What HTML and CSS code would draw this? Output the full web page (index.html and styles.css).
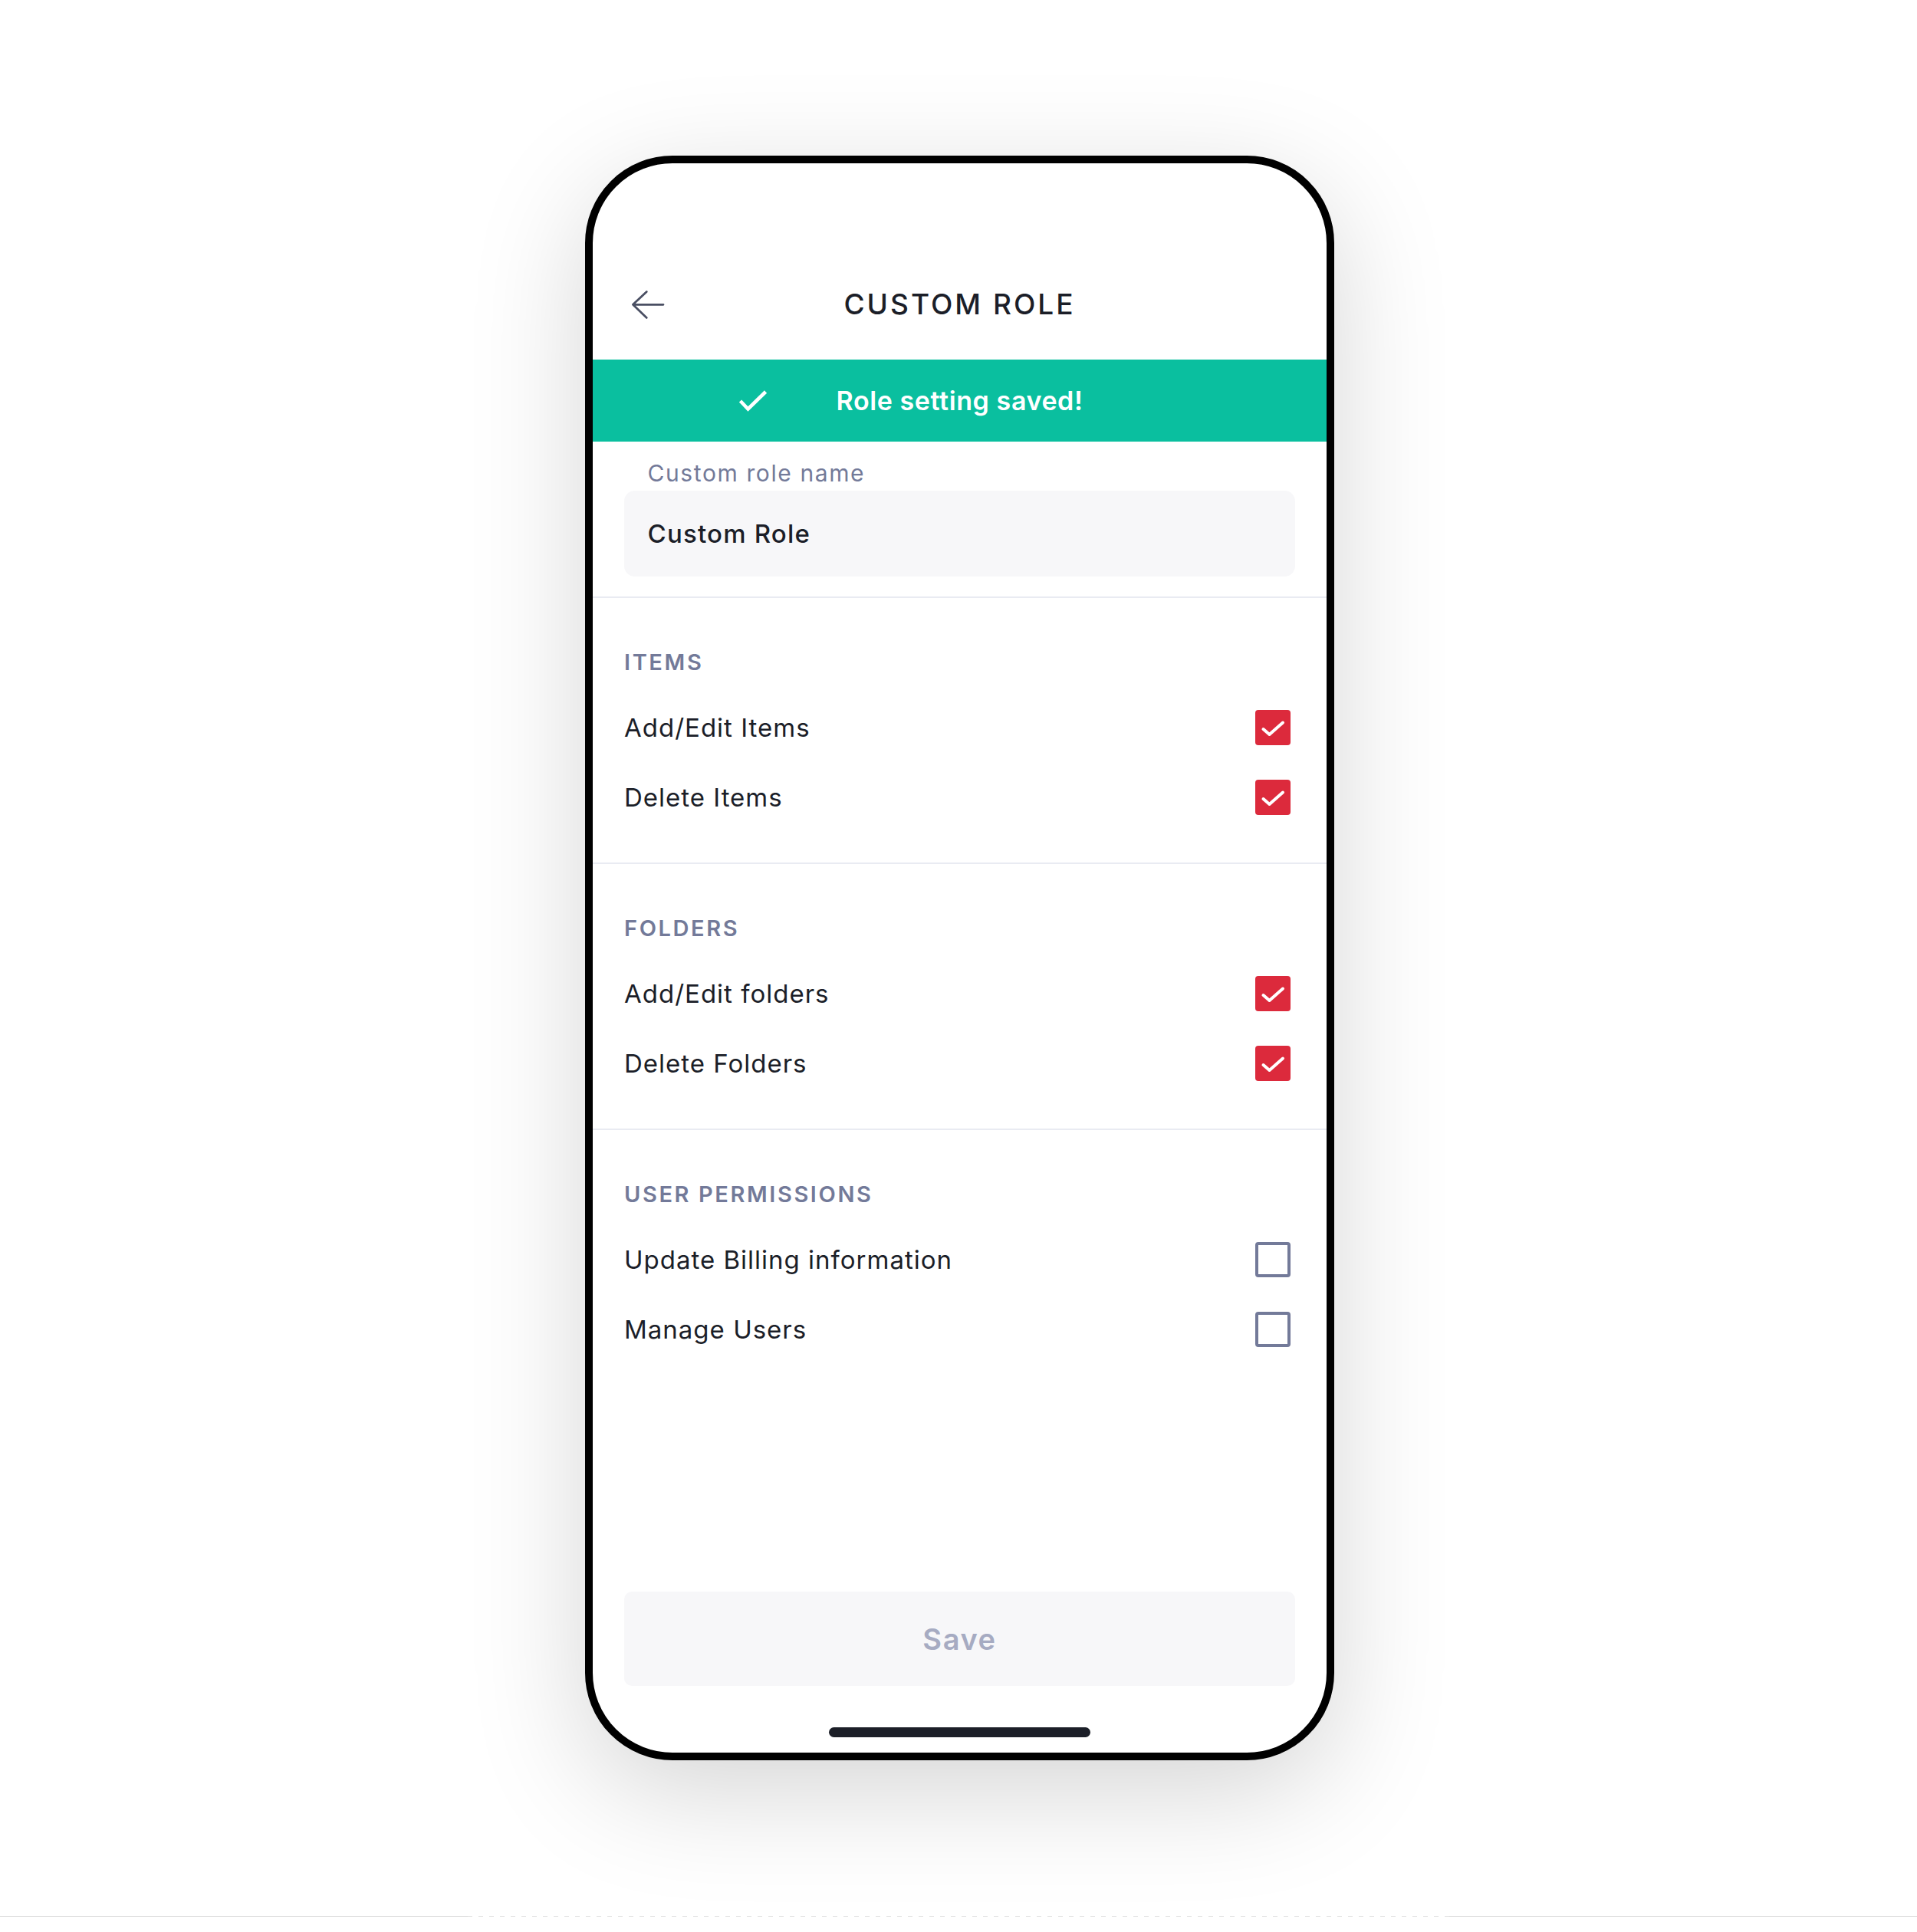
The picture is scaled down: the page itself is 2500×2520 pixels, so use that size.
FILE: index.html
```html
<!DOCTYPE html>
<html lang="en">
<head>
<meta charset="utf-8">
<title>Custom Role</title>
<link rel="stylesheet" href="styles.css">
</head>
<body>
<div class="stage">
  <div class="phone">
    <header class="topbar">
      <button class="back" aria-label="Back">
        <svg width="48" height="40" viewBox="0 0 48 40"><path d="M44 20.3H4.4M22.3 3.4L4.4 20.3L22.3 37.4" fill="none" stroke="#4a4f63" stroke-width="2.8" stroke-linecap="round" stroke-linejoin="round"/></svg>
      </button>
      <h1 class="title">CUSTOM ROLE</h1>
      <span></span>
    </header>

    <div class="toast">
      <svg class="toast-icon" width="44" height="36" viewBox="0 0 44 36"><path d="M5.5 18L15.5 28.5L38.5 6" fill="none" stroke="#fff" stroke-width="4.6"/></svg>
      <span class="toast-text">Role setting saved!</span>
      <span></span>
    </div>

    <div class="form">
      <label class="field-label">Custom role name</label>
      <div class="field">Custom Role</div>
    </div>

    <section class="group">
      <h2 class="group-title">ITEMS</h2>
      <div class="row"><span>Add/Edit Items</span><span class="box checked"><svg width="46" height="46" viewBox="0 0 46 46"><path d="M10.5 25L18.5 32L36 16.5" fill="none" stroke="#fff" stroke-width="4" stroke-linecap="round" stroke-linejoin="round"/></svg></span></div>
      <div class="row"><span>Delete Items</span><span class="box checked"><svg width="46" height="46" viewBox="0 0 46 46"><path d="M10.5 25L18.5 32L36 16.5" fill="none" stroke="#fff" stroke-width="4" stroke-linecap="round" stroke-linejoin="round"/></svg></span></div>
    </section>

    <section class="group">
      <h2 class="group-title">FOLDERS</h2>
      <div class="row"><span>Add/Edit folders</span><span class="box checked"><svg width="46" height="46" viewBox="0 0 46 46"><path d="M10.5 25L18.5 32L36 16.5" fill="none" stroke="#fff" stroke-width="4" stroke-linecap="round" stroke-linejoin="round"/></svg></span></div>
      <div class="row"><span>Delete Folders</span><span class="box checked"><svg width="46" height="46" viewBox="0 0 46 46"><path d="M10.5 25L18.5 32L36 16.5" fill="none" stroke="#fff" stroke-width="4" stroke-linecap="round" stroke-linejoin="round"/></svg></span></div>
    </section>

    <section class="group">
      <h2 class="group-title">USER PERMISSIONS</h2>
      <div class="row"><span>Update Billing information</span><span class="box"></span></div>
      <div class="row"><span>Manage Users</span><span class="box"></span></div>
    </section>

    <div class="spacer"></div>

    <div class="footer">
      <button class="save">Save</button>
      <div class="home"></div>
    </div>
  </div>
</div>
<div class="baseline"><span class="line-solid"></span><span class="line-dotted"></span><span class="line-solid"></span></div>
</body>
</html>
```
FILE: styles.css
```css
* { box-sizing: border-box; margin: 0; padding: 0; }

html, body { background: #fff; }

body {
  width: 2500px;
  height: 2520px;
  overflow: hidden;
  font-family: Inter, "Noto Sans", sans-serif;
  color: #1b1e28;
}

.stage {
  display: flex;
  justify-content: center;
  padding: 203px 0 0 3px;
}

.phone {
  width: 977px;
  height: 2093px;
  border: 10px solid #000;
  border-radius: 114px;
  background: #fff;
  display: flex;
  flex-direction: column;
  overflow: hidden;
  box-shadow: 0 40px 150px rgba(0, 0, 0, 0.17);
}

.topbar {
  height: 256px;
  padding-top: 112px;
  display: grid;
  grid-template-columns: 1fr auto 1fr;
  align-items: center;
}

.back {
  justify-self: start;
  margin-left: 47.5px;
  background: none;
  border: 0;
  display: flex;
}

.back svg { display: block; }

.title {
  font-size: 37px;
  font-weight: 500;
  letter-spacing: 3px;
  line-height: 40px;
  color: #1b1e28;
}

.toast {
  height: 107px;
  background: #0abf9f;
  display: grid;
  grid-template-columns: 1fr auto 1fr;
  align-items: center;
}

.toast-icon {
  display: block;
  justify-self: end;
  margin-right: 87px;
}

.toast-text {
  font-size: 34px;
  font-weight: 600;
  letter-spacing: 0.6px;
  line-height: 40px;
  color: #fff;
}

.form {
  padding: 21px 41px 26px;
}

.field-label {
  display: block;
  padding-left: 30.5px;
  font-size: 30px;
  letter-spacing: 1.6px;
  line-height: 40px;
  color: #737a99;
}

.field {
  margin-top: 3px;
  height: 112px;
  background: #f7f7f9;
  border-radius: 14px;
  padding-left: 30.5px;
  display: flex;
  align-items: center;
  font-size: 33px;
  font-weight: 500;
  letter-spacing: 1.2px;
  color: #1b1e28;
}

.group {
  border-top: 2px solid #e9ebf2;
  padding: 64px 41px 40px;
}

.group-title {
  font-size: 29px;
  font-weight: 600;
  letter-spacing: 2.6px;
  line-height: 40px;
  color: #737a99;
  margin-bottom: 19px;
}

.row {
  height: 91px;
  display: flex;
  justify-content: space-between;
  align-items: center;
  font-size: 33px;
  letter-spacing: 1px;
  line-height: 40px;
  color: #1b1e28;
}

.box {
  width: 46px;
  height: 46px;
  margin-right: 6px;
  border-radius: 4px;
  border: 4px solid #737a99;
  flex: none;
}

.box.checked {
  border: 0;
  background: #dc2a3c;
}

.box svg { display: block; }

.spacer { flex: 1; }

.footer {
  padding: 0 41px 20.5px;
}

.save {
  display: block;
  width: 100%;
  height: 123px;
  border: 0;
  border-radius: 10px;
  background: #f7f7f9;
  font-family: inherit;
  font-size: 38px;
  font-weight: 600;
  letter-spacing: 1.6px;
  color: #a6abc2;
}

.home {
  width: 341px;
  height: 13px;
  border-radius: 7px;
  background: #1c1f28;
  margin: 53.5px auto 0;
}

.baseline {
  margin-top: 203px;
  height: 1px;
  display: flex;
}

.line-solid {
  width: 610px;
  background: #d6d6d6;
}

.line-dotted {
  flex: 1;
  background: repeating-linear-gradient(90deg, #dedede 0 6px, transparent 6px 14px);
}
```
